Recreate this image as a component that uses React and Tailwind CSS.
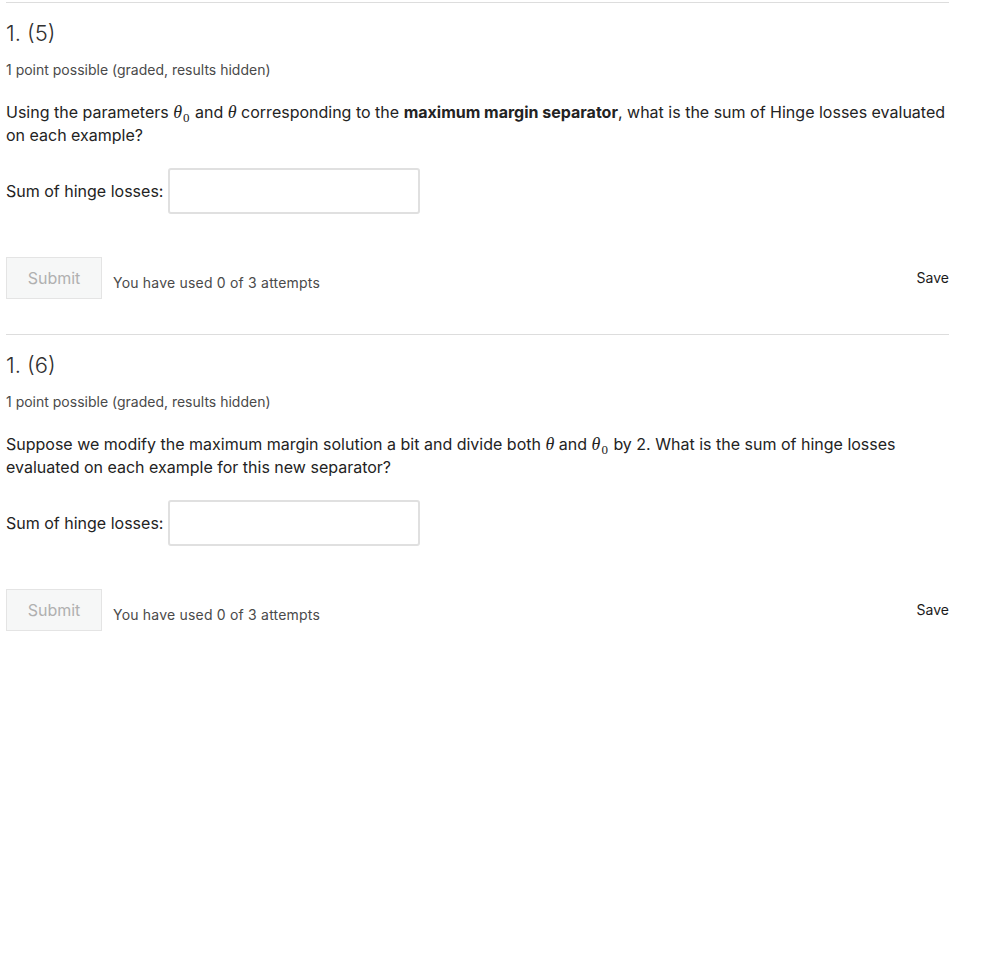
import React from 'react'

const font = { fontFamily: 'Inter, "Noto Sans", sans-serif' }
const serif = { fontFamily: '"Liberation Serif", serif' }

function Theta({ sub }) {
  return (
    <span className="whitespace-nowrap leading-[0]">
      <span className="italic text-[18px] leading-[0]" style={serif}>θ</span>
      {sub && <span className="text-[13px] leading-[0] relative top-[4px] ml-[1px] mr-[1px]" style={serif}>0</span>}
    </span>
  )
}

function Problem({ title, question }) {
  return (
    <div className="border-t border-[#dddddd] pt-[16px] pb-[35px]">
      <h3 className="text-[22px] leading-[28px] font-light text-[#313131]">{title}</h3>
      <div className="mt-[14px] text-[14px] leading-[18px] text-[#4a4a4a]">1 point possible (graded, results hidden)</div>
      <p className="mt-[22px] text-[16px] leading-[23px] text-[#232323]">{question}</p>
      <div className="mt-[21px] flex items-center gap-[5px]">
        <label className="text-[16px] text-[#232323]">Sum of hinge losses:</label>
        <input type="text" className="w-[252px] h-[46px] border-2 border-[#e0e0e0] rounded-[3px] bg-white outline-none" />
      </div>
      <div className="mt-[43px] flex items-start">
        <button className="w-[96px] h-[42px] border border-[#e4e4e4] bg-[#f6f7f7] text-[16px] text-[#b0b0b0]">Submit</button>
        <span className="ml-[11px] mt-[16px] text-[14px] leading-[20px] tracking-[0.2px] text-[#4a4a4a]">You have used 0 of 3 attempts</span>
        <span className="ml-auto mt-[11px] text-[14px] leading-[20px] text-[#1a1a1a]">Save</span>
      </div>
    </div>
  )
}

export default function App() {
  return (
    <div className="bg-white min-h-[976px] pt-[2px]" style={font}>
      <div className="ml-[6px] w-[943px]">
        <Problem
          title="1. (5)"
          question={
            <>
              Using the parameters <Theta sub /> and <Theta /> corresponding to the <b className="font-bold">maximum margin separator</b>, what is the sum of Hinge losses evaluated on each example?
            </>
          }
        />
        <Problem
          title="1. (6)"
          question={
            <>
              Suppose we modify the maximum margin solution a bit and divide both <Theta /> and <Theta sub /> by 2. What is the sum of hinge losses evaluated on each example for this new separator?
            </>
          }
        />
      </div>
    </div>
  )
}
